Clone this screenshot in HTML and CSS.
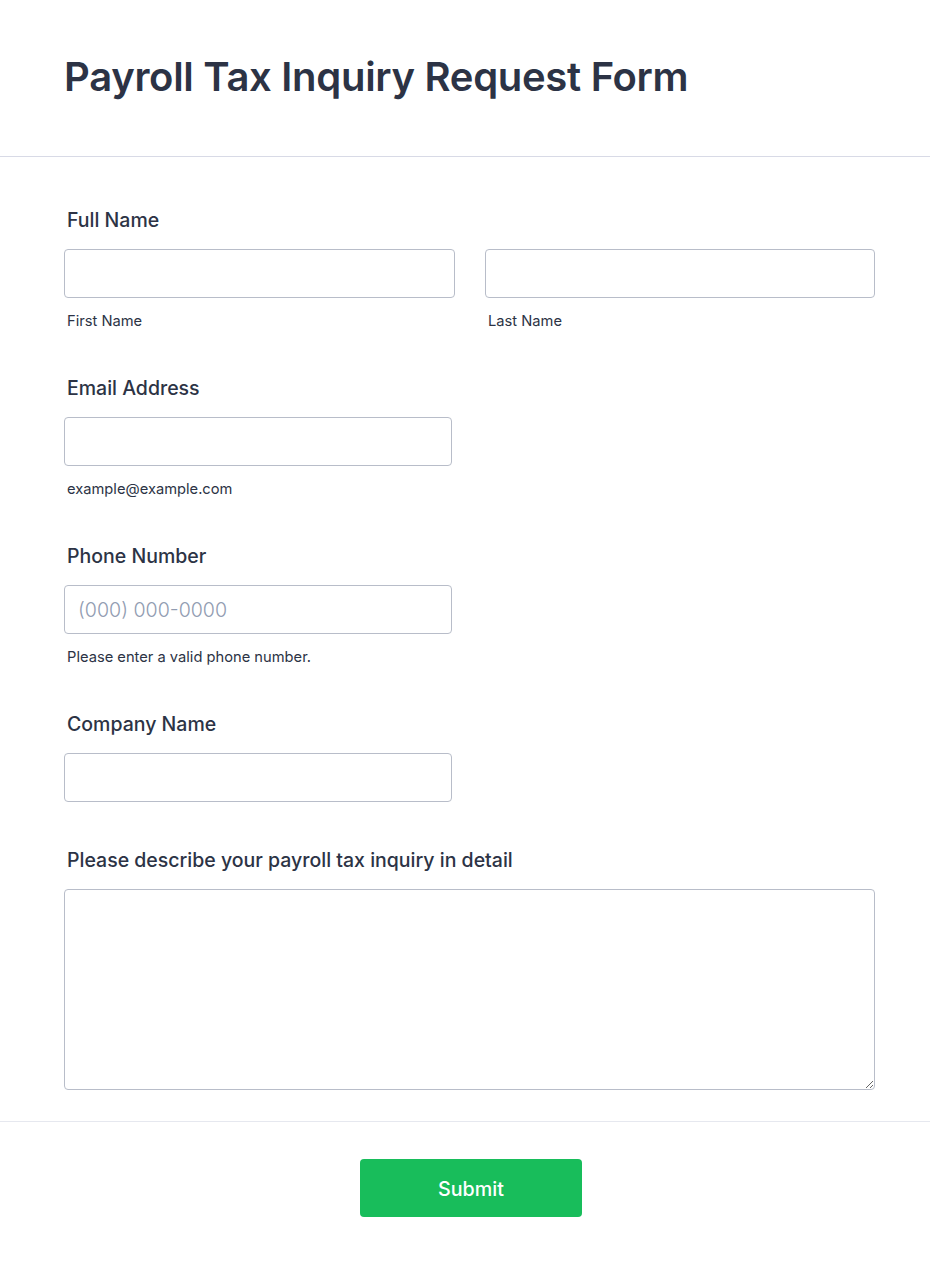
FILE: index.html
```html
<!DOCTYPE html>
<html lang="en">
<head>
<meta charset="utf-8">
<title>Payroll Tax Inquiry Request Form</title>
<link rel="stylesheet" href="styles.css">
</head>
<body>
<div class="page">
  <header class="form-header">
    <h1 class="form-title">Payroll Tax Inquiry Request Form</h1>
  </header>
  <form class="form-body">
    <div class="field">
      <label class="field-label">Full Name</label>
      <div class="name-row">
        <div class="name-col">
          <input class="text-input" type="text">
          <span class="sublabel">First Name</span>
        </div>
        <div class="name-col">
          <input class="text-input" type="text">
          <span class="sublabel">Last Name</span>
        </div>
      </div>
    </div>
    <div class="field">
      <label class="field-label">Email Address</label>
      <div class="half">
        <input class="text-input" type="email">
        <span class="sublabel">example@example.com</span>
      </div>
    </div>
    <div class="field">
      <label class="field-label">Phone Number</label>
      <div class="half">
        <input class="text-input" type="tel" placeholder="(000) 000-0000">
        <span class="sublabel">Please enter a valid phone number.</span>
      </div>
    </div>
    <div class="field">
      <label class="field-label">Company Name</label>
      <div class="half">
        <input class="text-input" type="text">
      </div>
    </div>
    <div class="field field-last">
      <label class="field-label">Please describe your payroll tax inquiry in detail</label>
      <textarea class="text-area"></textarea>
    </div>
  </form>
  <footer class="form-footer">
    <button class="submit-btn" type="button">Submit</button>
  </footer>
</div>
</body>
</html>
```

FILE: styles.css
```css
* { box-sizing: border-box; }

html, body {
  margin: 0;
  padding: 0;
  background: #ffffff;
}

body {
  font-family: Inter, "Noto Sans", "Liberation Sans", sans-serif;
  color: #2c3345;
}

.page {
  width: 930px;
  min-height: 1268px;
  background: #ffffff;
}

.form-header {
  height: 157px;
  padding: 0 55px 0 64px;
  border-bottom: 1px solid #d8dae6;
  display: flex;
  align-items: center;
}

.form-title {
  margin: 0 0 2px 0;
  font-size: 40px;
  font-weight: 600;
  line-height: 48px;
  letter-spacing: -0.3px;
  color: #2c3345;
}

.form-body {
  padding: 50px 55px 31px 64px;
  display: flex;
  flex-direction: column;
  gap: 45px;
}

.field {
  display: flex;
  flex-direction: column;
}

.field-label {
  font-size: 19.5px;
  font-weight: 500;
  line-height: 24px;
  padding: 1px 0 0 3px;
  margin-bottom: 17px;
  color: #2c3345;
}

.name-row {
  display: grid;
  grid-template-columns: 391px 390px;
  column-gap: 30px;
}

.name-col,
.half {
  display: flex;
  flex-direction: column;
}

.half { width: 388px; }

.text-input {
  height: 49px;
  width: 100%;
  border: 1px solid #b8bdc9;
  border-radius: 4px;
  padding: 0 13px;
  font-family: inherit;
  font-size: 19.6px;
  font-weight: 300;
  color: #2c3345;
  background: #ffffff;
  outline: none;
}

.text-input::placeholder {
  color: #919cb1;
  font-weight: 300;
}

.sublabel {
  margin-top: 14px;
  font-size: 14.7px;
  line-height: 18px;
  padding-left: 3px;
  color: #2c3345;
}

.text-area {
  width: 811px;
  height: 201px;
  border: 1px solid #b8bdc9;
  border-radius: 4px;
  padding: 10px 13px;
  font-family: inherit;
  font-size: 16px;
  resize: vertical;
  outline: none;
  display: block;
}

.form-footer {
  border-top: 1px solid #e6e8ef;
  padding: 37px 0 50px;
  display: flex;
  justify-content: center;
}

.submit-btn {
  width: 222px;
  height: 58px;
  margin-left: 12px;
  padding: 2px 0 0;
  border: none;
  border-radius: 4px;
  background: #18bd5b;
  color: #ffffff;
  font-family: inherit;
  font-size: 19.7px;
  font-weight: 500;
  cursor: pointer;
}
```
